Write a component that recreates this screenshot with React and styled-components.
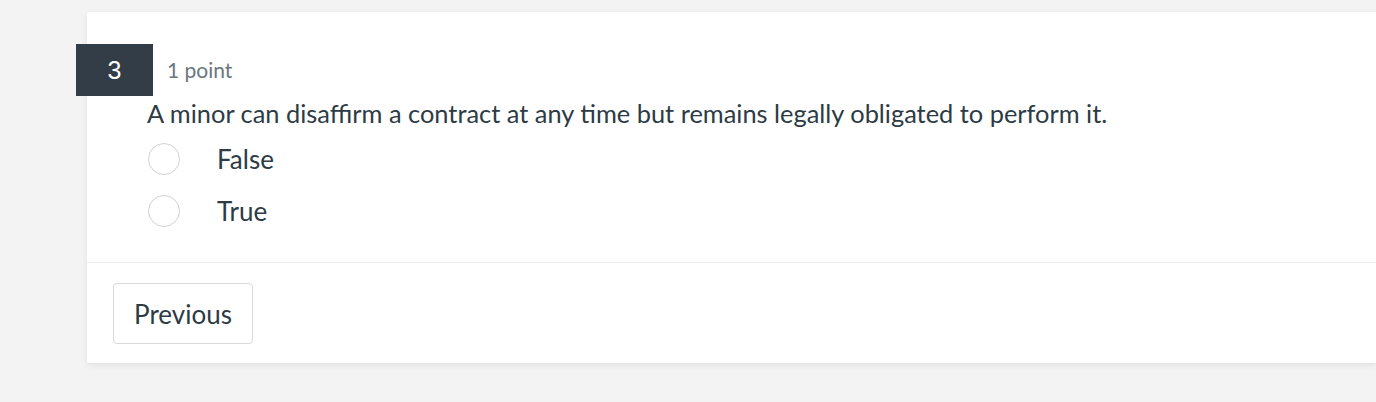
import styled, { createGlobalStyle } from 'styled-components'

const Global = createGlobalStyle`
  html, body {
    margin: 0;
    padding: 0;
    background: #f3f3f3;
    font-family: Lato, "Noto Sans", sans-serif;
  }
`

const Page = styled.div`
  padding: 12px 0 0 87px;
  height: 390px;
  overflow: hidden;
`

const Card = styled.div`
  background: #fff;
  box-shadow: 0 2px 6px rgba(0, 0, 0, 0.08);
  border-radius: 2px 0 0 2px;
`

const Body = styled.div`
  padding: 32px 0 0 0;
  height: 251px;
  box-sizing: border-box;
  border-bottom: 1px solid #efefef;
`

const Header = styled.div`
  display: flex;
  align-items: center;
  margin-left: -11px;
  height: 52px;
`

const Badge = styled.div`
  width: 77px;
  height: 52px;
  background: #333d47;
  color: #fff;
  font-family: "Liberation Sans", Arial, sans-serif;
  font-size: 25px;
  display: flex;
  align-items: center;
  justify-content: center;
`

const Points = styled.span`
  margin-left: 14px;
  color: #6b7780;
  font-size: 21px;
  margin-top: -1px;
`

const Question = styled.div`
  margin: 2px 0 0 60px;
  color: #2d3b45;
  font-size: 25.4px;
  line-height: 30px;
`

const Options = styled.div`
  display: flex;
  flex-direction: column;
  margin: 5px 0 0 61px;
`

const Option = styled.label`
  display: flex;
  align-items: center;
  height: 52px;
  color: #2d3b45;
  font-size: 26px;
`

const Radio = styled.span`
  width: 30px;
  height: 30px;
  border: 1px solid #cfd3d6;
  border-radius: 50%;
  background: #fff;
  margin-right: 37px;
`

const Footer = styled.div`
  padding: 20px 26px 19px;
`

const Button = styled.button`
  width: 140px;
  height: 61px;
  background: #fff;
  border: 1px solid #d7d9db;
  border-radius: 4px;
  color: #2d3b45;
  font-family: Lato, "Noto Sans", sans-serif;
  font-size: 26px;
  cursor: pointer;
`

export default function App() {
  return (
    <>
      <Global />
      <Page>
        <Card>
          <Body>
            <Header>
              <Badge>3</Badge>
              <Points>1 point</Points>
            </Header>
            <Question>A minor can disaffirm a contract at any time but remains legally obligated to perform it.</Question>
            <Options>
              <Option><Radio />False</Option>
              <Option><Radio />True</Option>
            </Options>
          </Body>
          <Footer>
            <Button>Previous</Button>
          </Footer>
        </Card>
      </Page>
    </>
  )
}
